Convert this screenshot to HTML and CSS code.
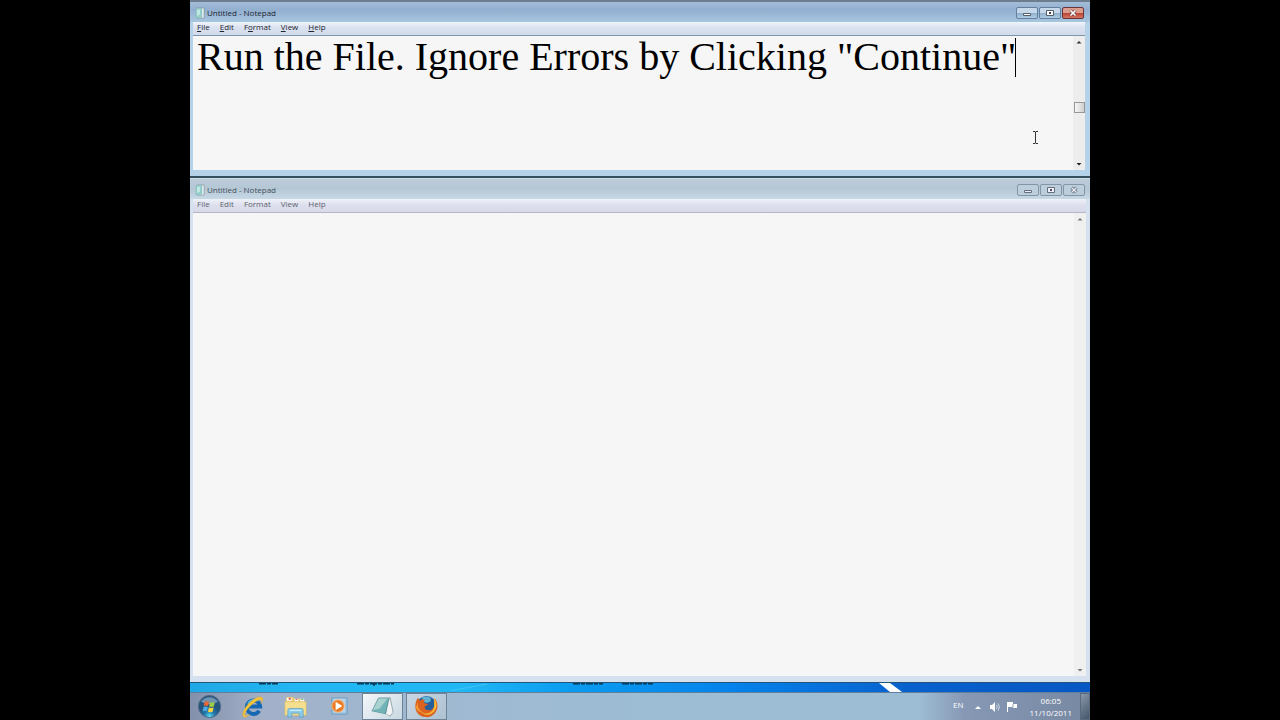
FILE: index.html
```html
<!DOCTYPE html>
<html lang="en">
<head>
    <meta charset="UTF-8">
    <meta name="viewport" content="width=device-width, initial-scale=1.0">
    <title>Untitled - Notepad</title>
    <link rel="stylesheet" href="styles.css">
</head>
<body>

<div class="desktop">
    <section class="window">
        <header class="title-bar">
            <svg class="note-icon" viewBox="0 0 10 12"><path d="M2 1h7v10H2z" fill="#fff" stroke="#7d8f93" stroke-width=".7"/><path d="M1 2l6-1v9l-6 1z" fill="#90cfcb" stroke="#8fb9bd" stroke-width=".6"/><path d="M2 3l3-.5v5L2 9z" fill="#c0e9e3"/></svg>
            <span class="title">Untitled - Notepad</span>
            <div class="controls">
                <button aria-label="Minimize"><svg viewBox="0 0 10 8"><path d="M1.500 4.500h7v2h-7z" fill="#fff" stroke="#555f6b"/></svg></button>
                <button aria-label="Maximize"><svg viewBox="0 0 10 8"><path d="M1.500 1.500h7v5h-7z" fill="#fff" stroke="#555f6b"/><path d="M4 3h2v2H4z" fill="#445"/></svg></button>
                <button class="close" aria-label="Close"><svg viewBox="0 0 10 8"><path d="M2.500 1.500l5 5M7.500 1.500l-5 5" stroke="#6b3a3a" stroke-width="3"/><path d="M2.500 1.500l5 5M7.500 1.500l-5 5" stroke="#fff" stroke-width="1.700"/></svg></button>
            </div>
        </header>
        <nav class="menu">
            <button><u>F</u>ile</button>
            <button><u>E</u>dit</button>
            <button>F<u>o</u>rmat</button>
            <button><u>V</u>iew</button>
            <button><u>H</u>elp</button>
        </nav>
        <div class="editor">
            <textarea class="big-text" aria-label="Note text" spellcheck="false">Run the File. Ignore Errors by Clicking "Continue"</textarea>
            <div class="scrollbar">
                <svg viewBox="0 0 12 8"><path d="M3.500 5.500L6 3l2.500 2.500z" fill="#333"/></svg>
                <span class="thumb"></span>
                <svg viewBox="0 0 12 8"><path d="M3.500 3L6 5.500 8.500 3z" fill="#222"/></svg>
            </div>
            <span class="caret"></span>
            <svg class="pointer" viewBox="0 0 7 13"><path d="M1 .5h2l.5.5.5-.5h2M3.500 1v11M1 12.500h2l.5-.5.5.5h2" fill="none" stroke="#333"/></svg>
        </div>
    </section>

    <section class="window inactive">
        <header class="title-bar">
            <svg class="note-icon" viewBox="0 0 10 12"><path d="M2 1h7v10H2z" fill="#fff" stroke="#7d8f93" stroke-width=".7"/><path d="M1 2l6-1v9l-6 1z" fill="#90cfcb" stroke="#8fb9bd" stroke-width=".6"/><path d="M2 3l3-.5v5L2 9z" fill="#c0e9e3"/></svg>
            <span class="title">Untitled - Notepad</span>
            <div class="controls">
                <button aria-label="Minimize"><svg viewBox="0 0 10 8"><path d="M1.500 4.500h7v2h-7z" fill="#eef" stroke="#65707b"/></svg></button>
                <button aria-label="Maximize"><svg viewBox="0 0 10 8"><path d="M1.500 1.500h7v5h-7z" fill="#eef" stroke="#65707b"/><path d="M4 3h2v2H4z" fill="#556"/></svg></button>
                <button aria-label="Close"><svg viewBox="0 0 10 8"><path d="M2.500 1.500l5 5M7.500 1.500l-5 5" stroke="#5c6772" stroke-width="3"/><path d="M2.500 1.500l5 5M7.500 1.500l-5 5" stroke="#eef" stroke-width="1.300"/></svg></button>
            </div>
        </header>
        <nav class="menu">
            <button>File</button>
            <button>Edit</button>
            <button>Format</button>
            <button>View</button>
            <button>Help</button>
        </nav>
        <div class="editor">
            <textarea aria-label="Empty note" spellcheck="false"></textarea>
            <div class="scrollbar">
                <svg viewBox="0 0 12 8"><path d="M3.500 5.500L6 3l2.500 2.500z" fill="#777"/></svg>
                <svg viewBox="0 0 12 8"><path d="M3.500 3L6 5.500 8.500 3z" fill="#777"/></svg>
            </div>
        </div>
    </section>

    <svg class="wallpaper" viewBox="0 0 900 10" preserveAspectRatio="none">
        <defs>
            <linearGradient id="sky">
                <stop offset="0" stop-color="#20a8e6"/>
                <stop offset=".12" stop-color="#22b7f3"/>
                <stop offset=".3" stop-color="#21b8f4"/>
                <stop offset=".42" stop-color="#0a9cf0"/>
                <stop offset=".6" stop-color="#0583ec"/>
                <stop offset=".8" stop-color="#0861cd"/>
                <stop offset="1" stop-color="#0757c4"/>
            </linearGradient>
        </defs>
        <path d="M0 0h900v10H0z" fill="url(#sky)"/>
        <path d="M262 9l38-8h-6l-34 7z" fill="#4dc8f5" opacity=".7"/>
        <path d="M689 0h11l12 10h-12z" fill="#fff"/>
        <path d="M69 .8h19M167 .8h37M383 .8h30M432 .8h31" stroke="#073b58" stroke-width="1.500" stroke-dasharray="7 1 4 1"/>
        <path d="M184 1v2" stroke="#073b58" stroke-width="2"/>
    </svg>

    <footer class="taskbar">
        <button class="task" aria-label="Start">
            <svg viewBox="0 0 26 26"><defs><radialGradient id="orb" cy=".95"><stop offset="0" stop-color="#5de0f5"/><stop offset=".5" stop-color="#2276a8"/><stop offset="1" stop-color="#25557f"/></radialGradient></defs><circle cx="13" cy="13" r="11.500" fill="url(#orb)" stroke="#4d6784"/><path d="M4 8a11 11 0 0 1 18 0q-9 5-18 0z" fill="#a3bdcf" opacity=".6"/><path d="M8 8q2-1 4.500 0l-1 4.500q-2-1-4.500 0z" fill="#ef6535"/><path d="M13.500 8.500q2 1 5 0l-1 4.500q-2 1-5 0z" fill="#9fce40"/><path d="M6.800 13.500q2-1 4.500 0l-1 4.500q-2-1-4.500 0z" fill="#4ea8e4"/><path d="M12.300 14q2 1 5 0l-1 4.500q-2 1-5 0z" fill="#fbd33d"/></svg>
        </button>
        <button class="task" aria-label="Internet Explorer">
            <svg viewBox="0 0 26 26"><path d="M20 17.500A7 7 0 1 1 21 13H8" fill="none" stroke="#1668b4" stroke-width="4"/><path d="M8 10q4-6 11-3" fill="none" stroke="#58b8e8" stroke-width="1.500"/><path d="M4 24C-1 20 12 3 21 3c4 0 3 4 1 7 1-3 1-4-1-4C14 7 3 20 5 22q2 1 5-1-4 4-6 3z" fill="#f3c63b" stroke="#d5a537" stroke-width=".5"/></svg>
        </button>
        <button class="task" aria-label="Windows Explorer">
            <svg viewBox="0 0 26 26"><path d="M3 5l1-2h7l1 2h9l1 2v15H3z" fill="#e7cb70"/><path d="M4 4h5v3H4zM12 5h4v3h-4zM18 5h4v3h-4z" fill="#fff"/><path d="M6 4h2v2H6zM13 5h2v1h-2z" fill="#d54b35"/><path d="M19 5h2v1h-2z" fill="#398c4b"/><path d="M2 8h22v14H2z" fill="#f6df8e" stroke="#d9bd66" stroke-width=".7"/><path d="M5 24v-7q0-2 2-2h12q2 0 2 2v7h-4v-4H9v4z" fill="#8acbe8" stroke="#5a9dc2" stroke-width=".7"/><path d="M7 17h12" stroke="#d5f3fd"/></svg>
        </button>
        <button class="task" aria-label="Windows Media Player">
            <svg viewBox="0 0 26 26"><path d="M6 4h16v17H6z" fill="#9fc3df" stroke="#6f9fc3"/><path d="M8 5h12v14H8z" fill="#b9d4e7"/><circle cx="12.500" cy="12.500" r="6.500" fill="#eb7a24" stroke="#f7c28e"/><path d="M10 8l7 4.500-7 4.500z" fill="#fff"/></svg>
        </button>
        <button class="task open active" aria-label="Notepad">
            <svg viewBox="0 0 26 26"><path d="M19 4l2 0 3 15-3 4-5-2z" fill="#f3f5f5" stroke="#74868c" stroke-width=".7"/><path d="M9 4l11 0-4 17-14-3z" fill="#71b3b7" stroke="#4a7e88" stroke-width=".7"/><path d="M9 5l9 0-8 10-7 2z" fill="#a9d3d1"/><path d="M9 4h11" stroke="#d2e0e2" stroke-width="1.500" stroke-dasharray="1 1"/><path d="M2 18l14 3 5 2-5-1-14-3z" fill="#dbe8e8"/></svg>
        </button>
        <button class="task open" aria-label="Firefox">
            <svg viewBox="0 0 26 26"><circle cx="13" cy="12" r="10" fill="#275d99"/><path d="M8 4q5-3 9 0 2 4-3 5-4 1-6-5z" fill="#62b4d4"/><path d="M4 4l2 3q2-2 5-1l-1 3 5 2-4 2q0 4 5 4 6-1 5-8l1-4c6 8 0 20-10 19C1 23-1 12 4 4z" fill="#dc6220"/><path d="M21 4q5 8 0 14-5 6-13 2 11 2 13-7z" fill="#f8bd37"/><path d="M4 8q-1 9 7 12-8-1-9-6z" fill="#f39a2f"/></svg>
        </button>
        <div class="tray">
            <span class="lang">EN</span>
            <svg class="arrow" viewBox="0 0 8 8"><path d="M1 6l3-3 3 3z" fill="#fff"/></svg>
            <svg class="tray-icon" viewBox="0 0 12 12"><path d="M1 4h2l3-3v10L3 8H1z" fill="#fff"/><path d="M7.500 4q1.500 2 0 4M9 2.500q3 3.500 0 7" fill="none" stroke="#e3e9f1" stroke-width=".8"/></svg>
            <svg class="tray-icon" viewBox="0 0 12 12"><path d="M1.500 1v10" stroke="#fff"/><path d="M2 1h5v2h4v4H7V6H2z" fill="#fff"/><path d="M7 3v3" stroke="#69788e" stroke-width=".7"/></svg>
            <div class="clock"><time>06:05</time><time>11/10/2011</time></div>
        </div>
        <button class="show-desktop" aria-label="Show desktop"></button>
    </footer>
</div>

</body>
</html>
```
FILE: styles.css
```css
* {
    box-sizing: border-box;
}
body {
    margin: 0;
    background: #000;
    font-family: "Open Sans", "Noto Sans", sans-serif;
    font-size: 8px;
    line-height: 10px;
    color: #1b2530;
}
button {
    padding: 0;
    border: none;
    background: none;
    color: inherit;
    font: inherit;
}
svg {
    display: block;
}
.desktop {
    display: flex;
    flex-direction: column;
    width: 900px;
    max-width: 100%;
    height: 100vh;
    margin: 0 auto;
}
.window {
    display: flex;
    flex-direction: column;
    padding: 0 5px 6px 3px;
    background: #b5d2e8;
    border-top: 2px solid #6b7d8e;
    border-bottom: 2px solid #34505f;
}
.title-bar {
    display: flex;
    align-items: center;
    height: 20px;
    margin: 0 -5px 0 -3px;
    padding: 2px 6px 0 5px;
    background: linear-gradient(#a3bcd8, #92afd0 40%, #a9c6df);
}
.note-icon {
    width: 10px;
    height: 12px;
}
.title {
    padding-left: 2px;
}
.controls {
    display: flex;
    gap: 1px;
    margin-left: auto;
}
.controls button {
    display: flex;
    align-items: center;
    justify-content: center;
    width: 22px;
    height: 12px;
    border: 1px solid #63819f;
    border-radius: 2px;
    background: linear-gradient(#c5d8ea 45%, #91aeca 50%, #adcbe2);
}
.controls svg {
    width: 10px;
    height: 8px;
}
.controls .close {
    border-color: #6b3437;
    background: linear-gradient(#dc9c8e 45%, #bb4131 50%, #d47560);
}
.menu {
    display: flex;
    align-items: flex-start;
    gap: 10px;
    height: 14px;
    padding: 0 4px;
    background: linear-gradient(#f1f5fb, #dbe2f0 40%, #d2daeb);
    border-bottom: 1px solid #7f96ab;
}
.menu u {
    text-underline-offset: 1px;
}
.editor {
    position: relative;
    display: flex;
    height: 134px;
    background: #f6f6f6;
}
textarea {
    flex: 1;
    min-width: 0;
    padding: 1px 4px;
    border: none;
    outline: none;
    resize: none;
    overflow: hidden;
    background: none;
}
.big-text {
    color: #000;
    font-family: "Liberation Serif", serif;
    font-size: 40px;
    line-height: 40px;
}
.scrollbar {
    display: flex;
    flex-direction: column;
    align-items: center;
    width: 12px;
    padding: 2px 0;
    background: #ededed;
}
.scrollbar svg {
    width: 12px;
    height: 8px;
}
.scrollbar svg:last-child {
    margin-top: auto;
}
.thumb {
    width: 11px;
    height: 11px;
    margin-top: 56px;
    border: 1px solid #979797;
    background: linear-gradient(90deg, #f7f7f7, #cfcfcf);
}
.caret {
    position: absolute;
    top: 2px;
    left: 822px;
    width: 1px;
    height: 39px;
    background: #000;
}
.pointer {
    position: absolute;
    top: 95px;
    right: 46px;
    width: 7px;
    height: 13px;
}
.inactive {
    flex: 1;
    min-height: 0;
    padding: 0 4px 6px 3px;
    background: #d5e1ee;
    border-top: 1px solid #d2dce5;
    border-bottom: 1px solid #245577;
    color: #5d656e;
}
.inactive .title-bar {
    margin-right: -4px;
    padding-right: 5px;
    background: linear-gradient(#bccbd9, #b4c7d5 50%, #c8d9e6);
}
.inactive .title {
    color: #46515d;
}
.inactive .controls button {
    border-color: #8296a8;
    background: #bccddb;
}
.inactive .menu {
    background: linear-gradient(#eef2f8, #dddeed 50%, #d8d9e9);
    border-color: #b3b6c3;
}
.inactive .editor {
    flex: 1;
    height: auto;
}
.inactive .scrollbar {
    background: #f0f0f0;
}
.wallpaper {
    width: 100%;
    height: 9px;
}
.taskbar {
    display: flex;
    height: 28px;
    border-top: 1px solid #607f9c;
    background: linear-gradient(90deg, #8390ab, #a2b0c8 8%, #9fb7cf 20%, #9dbdd5 50%, #9dbdd5 81%, #8798b5 86%, #7788a2);
}
.task {
    display: flex;
    align-items: center;
    justify-content: center;
    width: 39px;
    margin-right: 4px;
}
.task svg {
    width: 25px;
    height: 25px;
}
.task.open {
    width: 41px;
    margin-right: 3px;
    border: 1px solid #6e8496;
    background: linear-gradient(135deg, #c9d7e4, #adc1d2);
}
.task.active {
    background: linear-gradient(135deg, #f3f7f9, #c9d8e2);
}
.tray {
    display: flex;
    align-items: center;
    margin-left: auto;
    color: #fff;
}
.lang {
    padding: 0 10px 4px 0;
}
.arrow {
    width: 8px;
    height: 8px;
    margin-right: 7px;
}
.tray-icon {
    width: 12px;
    height: 12px;
    margin-right: 5px;
}
.clock {
    display: flex;
    flex-direction: column;
    gap: 2px;
    padding: 0 8px 0 7px;
    text-align: center;
}
.show-desktop {
    width: 10px;
    border: 1px solid #5a6a7c;
    background: linear-gradient(135deg, #8997aa, #44566a);
}
```
